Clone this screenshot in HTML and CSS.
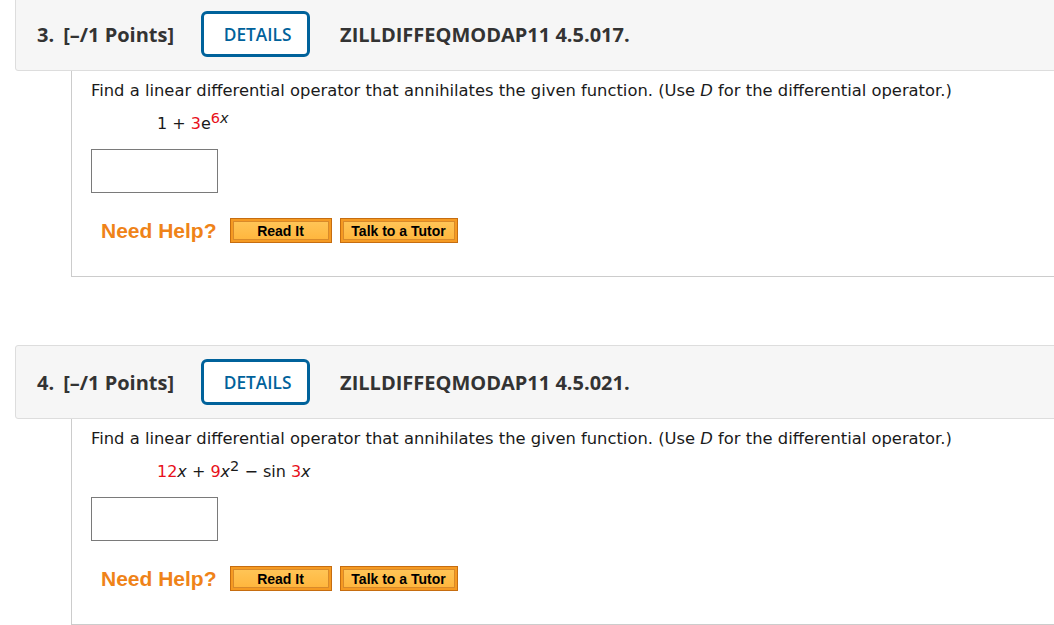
FILE: index.html
```html
<!DOCTYPE html>
<html lang="en">
<head>
    <meta charset="UTF-8">
    <meta name="viewport" content="width=device-width, initial-scale=1.0">
    <title>Assignment | Questions</title>
    <link rel="stylesheet" href="styles.css">
</head>
<body>
    <div class="questions">
        <!-- Question 3 -->
        <div class="question">
            <div class="question-header">
                <span class="q-number">3.</span>
                <span class="q-points">[&ndash;/1 Points]</span>
                <button class="details-button">DETAILS</button>
                <span class="q-ref">ZILLDIFFEQMODAP11 4.5.017.</span>
            </div>
            <div class="question-body">
                <p class="prompt">Find a linear differential operator that annihilates the given function. (Use <i>D</i> for the differential operator.)</p>
                <p class="formula">1 + <span class="num">3</span>e<sup><span class="num">6</span><i>x</i></sup></p>
                <input type="text" class="answer-box" aria-label="Answer">
                <div class="need-help">
                    <span class="help-label">Need Help?</span>
                    <button class="help-button read-it">Read It</button>
                    <button class="help-button tutor">Talk to a Tutor</button>
                </div>
            </div>
        </div>

        <!-- Question 4 -->
        <div class="question">
            <div class="question-header">
                <span class="q-number">4.</span>
                <span class="q-points">[&ndash;/1 Points]</span>
                <button class="details-button">DETAILS</button>
                <span class="q-ref">ZILLDIFFEQMODAP11 4.5.021.</span>
            </div>
            <div class="question-body">
                <p class="prompt">Find a linear differential operator that annihilates the given function. (Use <i>D</i> for the differential operator.)</p>
                <p class="formula"><span class="num">12</span><i>x</i> + <span class="num">9</span><i>x</i><sup>2</sup> &minus; sin <span class="num">3</span><i>x</i></p>
                <input type="text" class="answer-box" aria-label="Answer">
                <div class="need-help">
                    <span class="help-label">Need Help?</span>
                    <button class="help-button read-it">Read It</button>
                    <button class="help-button tutor">Talk to a Tutor</button>
                </div>
            </div>
        </div>
    </div>
</body>
</html>
```

FILE: styles.css
```css
body {
    margin: 0;
    padding: 0;
    background: #fff;
    color: #222;
    font-family: 'Open Sans', sans-serif;
}

.questions {
    margin-top: -3px;
    margin-left: 15px;
    margin-right: -20px;
}

.question {
    margin-bottom: 68px;
}

.question-header {
    display: flex;
    align-items: center;
    height: 72px;
    padding-left: 21px;
    background: #f6f6f6;
    border: 1px solid #ddd;
    border-radius: 3px;
    color: #333;
    font-size: 20px;
    font-weight: 700;
}

.q-number {
    margin-right: 9px;
}

.q-points {
    margin-right: 27px;
}

.details-button {
    box-sizing: border-box;
    width: 109px;
    height: 46px;
    margin-right: 30px;
    padding: 0 0 0 4px;
    background: #fff;
    border: 3px solid #00629b;
    border-radius: 6px;
    color: #00629b;
    font-family: 'Open Sans', sans-serif;
    font-size: 17.3px;
    font-weight: 600;
    cursor: pointer;
}

.question-body {
    margin-left: 56px;
    padding: 10px 19px 33px;
    border-left: 1px solid #ccc;
    border-bottom: 1px solid #ccc;
    font-family: 'DejaVu Sans', Verdana, sans-serif;
    color: #1a1a1a;
}

.prompt {
    margin: 0;
    line-height: 20px;
    font-size: 16.35px;
}

.formula {
    margin: 13px 0 0 66px;
    line-height: 20px;
    font-size: 16px;
}

.formula sup {
    font-size: 14.5px;
    line-height: 0;
    vertical-align: 6px;
}

.num {
    color: #e8101a;
}

.answer-box {
    display: block;
    box-sizing: border-box;
    width: 127px;
    height: 44px;
    margin-top: 15px;
    border: 1px solid #7a7a7a;
    background: #fff;
}

.need-help {
    display: flex;
    align-items: center;
    gap: 8px;
    margin-top: 25px;
    margin-left: 10px;
}

.help-label {
    margin-right: 5px;
    font-family: 'Liberation Sans', Arial, sans-serif;
    font-size: 21px;
    font-weight: 700;
    color: #ef8318;
}

.help-button {
    height: 25px;
    padding: 0;
    background: linear-gradient(#ffc75a, #ffb43a);
    border: 1px solid #c66d10;
    box-shadow: inset 0 0 0 2px #f59a22, inset 0 0 0 3px #d98a2a;
    color: #000;
    font-family: 'Liberation Sans', Arial, sans-serif;
    font-size: 14px;
    font-weight: 700;
    cursor: pointer;
}

.read-it {
    width: 102px;
}

.tutor {
    width: 118px;
}
```
